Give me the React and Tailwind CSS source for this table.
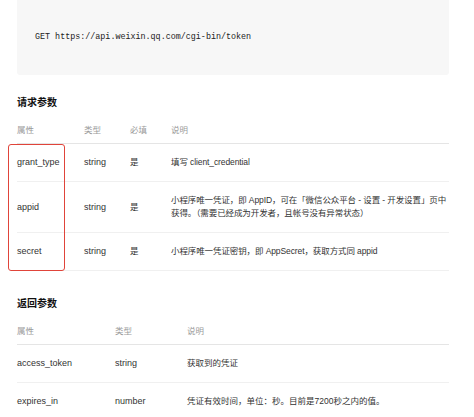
const reqRows = [
  { name: 'grant_type', type: 'string', req: '是', desc: ['填写 client_credential'] },
  { name: 'appid', type: 'string', req: '是', desc: ['小程序唯一凭证，即 AppID，可在「微信公众平台 - 设置 - 开发设置」页中', '获得。（需要已经成为开发者，且帐号没有异常状态）'] },
  { name: 'secret', type: 'string', req: '是', desc: ['小程序唯一凭证密钥，即 AppSecret，获取方式同 appid'] },
]

const resRows = [
  { name: 'access_token', type: 'string', desc: '获取到的凭证' },
  { name: 'expires_in', type: 'number', desc: '凭证有效时间，单位：秒。目前是7200秒之内的值。' },
]

export default function App(){
  return (
    <div className="w-[474px] h-[417px] overflow-hidden bg-white text-[9px] leading-[13px] text-[#333]" style={{ fontFamily: '"Liberation Sans", "Noto Sans CJK SC", sans-serif' }}>
      <div className="ml-[17px] w-[432px]">
        <div className="h-[75px] bg-[#f7f7f7] rounded-b-[3px] flex items-center pl-[18px]">
          <span className="text-[8.4px] text-[#222]" style={{ fontFamily: '"Liberation Mono", monospace' }}>GET https://api.weixin.qq.com/cgi-bin/token</span>
        </div>

        <h2 className="mt-[21px] text-[10px] font-bold text-[#111]">请求参数</h2>

        <div className="relative mt-[15px]">
          <div className="flex text-[8.5px] text-[#9a9a9a] pb-[6px] border-b border-[#e5e5e5]">
            <div className="w-[67px]">属性</div>
            <div className="w-[46px]">类型</div>
            <div className="w-[41px]">必填</div>
            <div className="flex-1">说明</div>
          </div>
          {reqRows.map(r => (
            <div key={r.name} className="flex items-center py-[12px] border-b border-[#f0f0f0]">
              <div className="w-[67px] shrink-0">{r.name}</div>
              <div className="w-[46px] shrink-0">{r.type}</div>
              <div className="w-[41px] shrink-0 text-[8.5px]">{r.req}</div>
              <div className="flex-1 mr-[-10px] text-[8.5px] tracking-[-0.1px]">
                {r.desc.map((l, i) => <div key={i} className="whitespace-nowrap">{l}</div>)}
              </div>
            </div>
          ))}
          <div className="absolute left-[-9px] top-[20px] w-[57px] h-[127px] border-[1.5px] border-[#e0443a] rounded-[3px]" />
        </div>

        <h2 className="mt-[26px] text-[10px] font-bold text-[#111]">返回参数</h2>

        <div className="mt-[15px]">
          <div className="flex text-[8.5px] text-[#9a9a9a] pb-[6px] border-b border-[#e5e5e5]">
            <div className="w-[98px]">属性</div>
            <div className="w-[72px]">类型</div>
            <div className="flex-1">说明</div>
          </div>
          {resRows.map(r => (
            <div key={r.name} className="flex items-center py-[12px] border-b border-[#f0f0f0]">
              <div className="w-[98px]">{r.name}</div>
              <div className="w-[72px]">{r.type}</div>
              <div className="flex-1 text-[8.5px]">{r.desc}</div>
            </div>
          ))}
        </div>
      </div>
    </div>
  )
}
